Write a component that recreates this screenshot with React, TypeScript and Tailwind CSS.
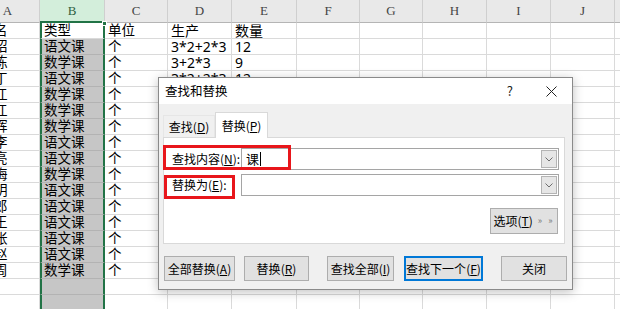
import React from "react";

const cols = [64, 65, 63, 64, 65, 63, 63, 64, 64, 64, 64];
const letters = ["A", "B", "C", "D", "E", "F", "G", "H", "I", "J", "K"];

const names = ["名", "绍", "陈", "丁", "江", "江", "辉", "李", "亮", "梅", "明", "郎", "王", "张", "赵", "周"];
const kinds = ["类型", "语文课", "数学课", "语文课", "数学课", "数学课", "数学课", "语文课", "语文课", "数学课", "语文课", "语文课", "语文课", "语文课", "语文课", "数学课"];

const rows: string[][] = names.map((n, i) => {
    if (i === 0) return [n, kinds[i], "单位", "生产", "数量"];
    if (i === 1 || i === 3) return [n, kinds[i], "个", "3*2+2*3", "12"];
    if (i === 2) return [n, kinds[i], "个", "3+2*3", "9"];
    return [n, kinds[i], "个", "", ""];
});
// two empty rows under the data
rows.push(["", "", "", "", ""], ["", "", "", "", ""]);

const Mn = ({ k }: { k: string }) => (
    <span>
        (<u>{k}</u>)
    </span>
);

const Btn = ({ w, children, focus }: { w: string; children: React.ReactNode; focus?: boolean }) => (
    <div
        className={`${w} h-[25px] flex items-center justify-center whitespace-nowrap bg-[#e1e1e1] ${
            focus ? "border-2 border-[#0078d7]" : "border border-[#adadad]"
        }`}
    >
        {children}
    </div>
);

const Combo = ({ value }: { value?: string }) => (
    <div className="flex-1 h-[22px] flex items-stretch bg-white border border-[#a5a5a5]">
        <div className="flex-1 flex items-center pl-[4px] text-[13px]">
            {value}
            {value && <span className="w-px h-[14px] bg-black ml-px" />}
        </div>
        <div className="w-[16px] my-px mr-px bg-[#e6e6e6] border border-[#b4b4b4] flex items-center justify-center">
            <svg width="8" height="5" viewBox="0 0 8 5">
                <path d="M0.5 0.5 L4 4 L7.5 0.5" fill="none" stroke="#6d6d6d" strokeWidth="1" />
            </svg>
        </div>
    </div>
);

export default function App() {
    return (
        <div
            className="relative w-[620px] h-[309px] overflow-hidden bg-white text-black"
            style={{ fontFamily: '"Noto Sans", "Noto Sans CJK SC", sans-serif' }}
        >
            <div className="-ml-[24px] flex flex-col">
                {/* column header */}
                <div className="flex h-[23px]">
                    {cols.map((w, i) => (
                        <div
                            key={i}
                            style={{ width: w }}
                            className={`shrink-0 flex items-center justify-center border-r border-r-[#cfcfcf] text-[13px] font-['Liberation_Serif',serif] ${
                                i === 1
                                    ? "bg-[#d3eedb] border-b-2 border-b-[#217346] text-[#2f5f42]"
                                    : "bg-[#e9e9e9] border-b border-b-[#b5b5b5] text-[#444]"
                            }`}
                        >
                            {letters[i]}
                        </div>
                    ))}
                </div>

                {rows.map((r, ri) => (
                    <div key={ri} className="flex h-[16px]">
                        {cols.map((w, ci) => {
                            const txt = r[ci] ?? "";
                            if (ci === 1) {
                                return (
                                    <div
                                        key={ci}
                                        style={{ width: w }}
                                        className={`shrink-0 flex items-center pl-[2px] pt-px border-x-2 border-x-[#217346] border-b text-[13.5px] leading-none ${
                                            ri === 0 ? "bg-white border-b-[#dadada]" : "bg-[#c6c6c6] border-b-[#b3b3b3]"
                                        }`}
                                    >
                                        {txt}
                                    </div>
                                );
                            }
                            return (
                                <div
                                    key={ci}
                                    style={{ width: w }}
                                    className={`shrink-0 flex items-center pt-px border-r border-b border-[#dadada] leading-none whitespace-nowrap ${
                                        ci === 0 ? "pl-[18px] overflow-hidden" : "pl-[3px]"
                                    } ${ci === 3 || ci === 4 ? "text-[14px]" : "text-[13.5px]"}`}
                                >
                                    {txt}
                                </div>
                            );
                        })}
                    </div>
                ))}
            </div>

            {/* fill handle */}
            <div className="absolute left-[102px] top-[21px] w-[5px] h-[5px] bg-[#217346] border border-white" />

            {/* find & replace dialog */}
            <div
                className="absolute left-[158px] top-[77px] w-[415px] h-[213px] flex flex-col bg-[#f0f0f0] border border-[#8a8a8a] shadow-[0_2px_10px_rgba(0,0,0,0.25)] text-[12px]"
                style={{ fontFamily: '"Noto Sans CJK SC", sans-serif' }}
            >
                <div className="h-[26px] bg-white flex items-center pl-[6px] pr-[15px]">
                    <span className="text-[12.5px]">查找和替换</span>
                    <span className="ml-auto mr-[33px] text-[13px] text-[#222]">?</span>
                    <svg width="11" height="11" viewBox="0 0 11 11">
                        <path d="M0.5 0.5 L10.5 10.5 M10.5 0.5 L0.5 10.5" stroke="#222" strokeWidth="1" />
                    </svg>
                </div>

                <div className="flex flex-col px-[4px] pt-[8px]">
                    {/* tabs */}
                    <div className="flex items-end h-[25px]">
                        <div className="w-[52px] h-[22px] flex items-center justify-center border border-b-0 border-[#e6e6e6]">
                            查找<Mn k="D" />
                        </div>
                        <div className="relative z-10 -mb-px w-[53px] h-[26px] flex items-center justify-center bg-white border border-b-0 border-[#d9d9d9]">
                            替换<Mn k="P" />
                        </div>
                    </div>

                    {/* panel */}
                    <div className="w-[402px] bg-white border border-[#d9d9d9] flex flex-col pt-[10px] pb-[9px] pr-[5px]">
                        <div className="flex items-center">
                            <div className="w-[77px] pl-[8px] whitespace-nowrap">
                                查找内容<Mn k="N" />:
                            </div>
                            <Combo value="课" />
                        </div>
                        <div className="flex items-center mt-[4px]">
                            <div className="w-[77px] pl-[8px] whitespace-nowrap">
                                替换为<Mn k="E" />:
                            </div>
                            <Combo />
                        </div>
                        <div className="flex justify-end mt-[12px] pr-px">
                            <div className="w-[68px] h-[26px] flex items-center justify-center gap-[5px] whitespace-nowrap bg-[#e1e1e1] border border-[#adadad]">
                                <span>
                                    选项<Mn k="T" />
                                </span>
                                <span className="text-[9px] text-[#777] tracking-[2px]">» »</span>
                            </div>
                        </div>
                    </div>

                    {/* buttons */}
                    <div className="flex mt-[12px] pl-px">
                        <Btn w="w-[71px]">
                            全部替换<Mn k="A" />
                        </Btn>
                        <div className="ml-[9px]">
                            <Btn w="w-[65px]">
                                替换<Mn k="R" />
                            </Btn>
                        </div>
                        <div className="ml-[18px]">
                            <Btn w="w-[67px]">
                                查找全部<Mn k="I" />
                            </Btn>
                        </div>
                        <div className="ml-[10px]">
                            <Btn w="w-[79px]" focus>
                                查找下一个<Mn k="F" />
                            </Btn>
                        </div>
                        <div className="ml-[18px]">
                            <Btn w="w-[66px]">关闭</Btn>
                        </div>
                    </div>
                </div>

                {/* red annotation boxes */}
                <div className="absolute left-[4px] top-[67px] w-[128px] h-[25px] border-[3px] border-[#e8161b]" />
                <div className="absolute left-[5px] top-[97px] w-[71px] h-[24px] border-[3px] border-[#e8161b]" />
            </div>
        </div>
    );
}
